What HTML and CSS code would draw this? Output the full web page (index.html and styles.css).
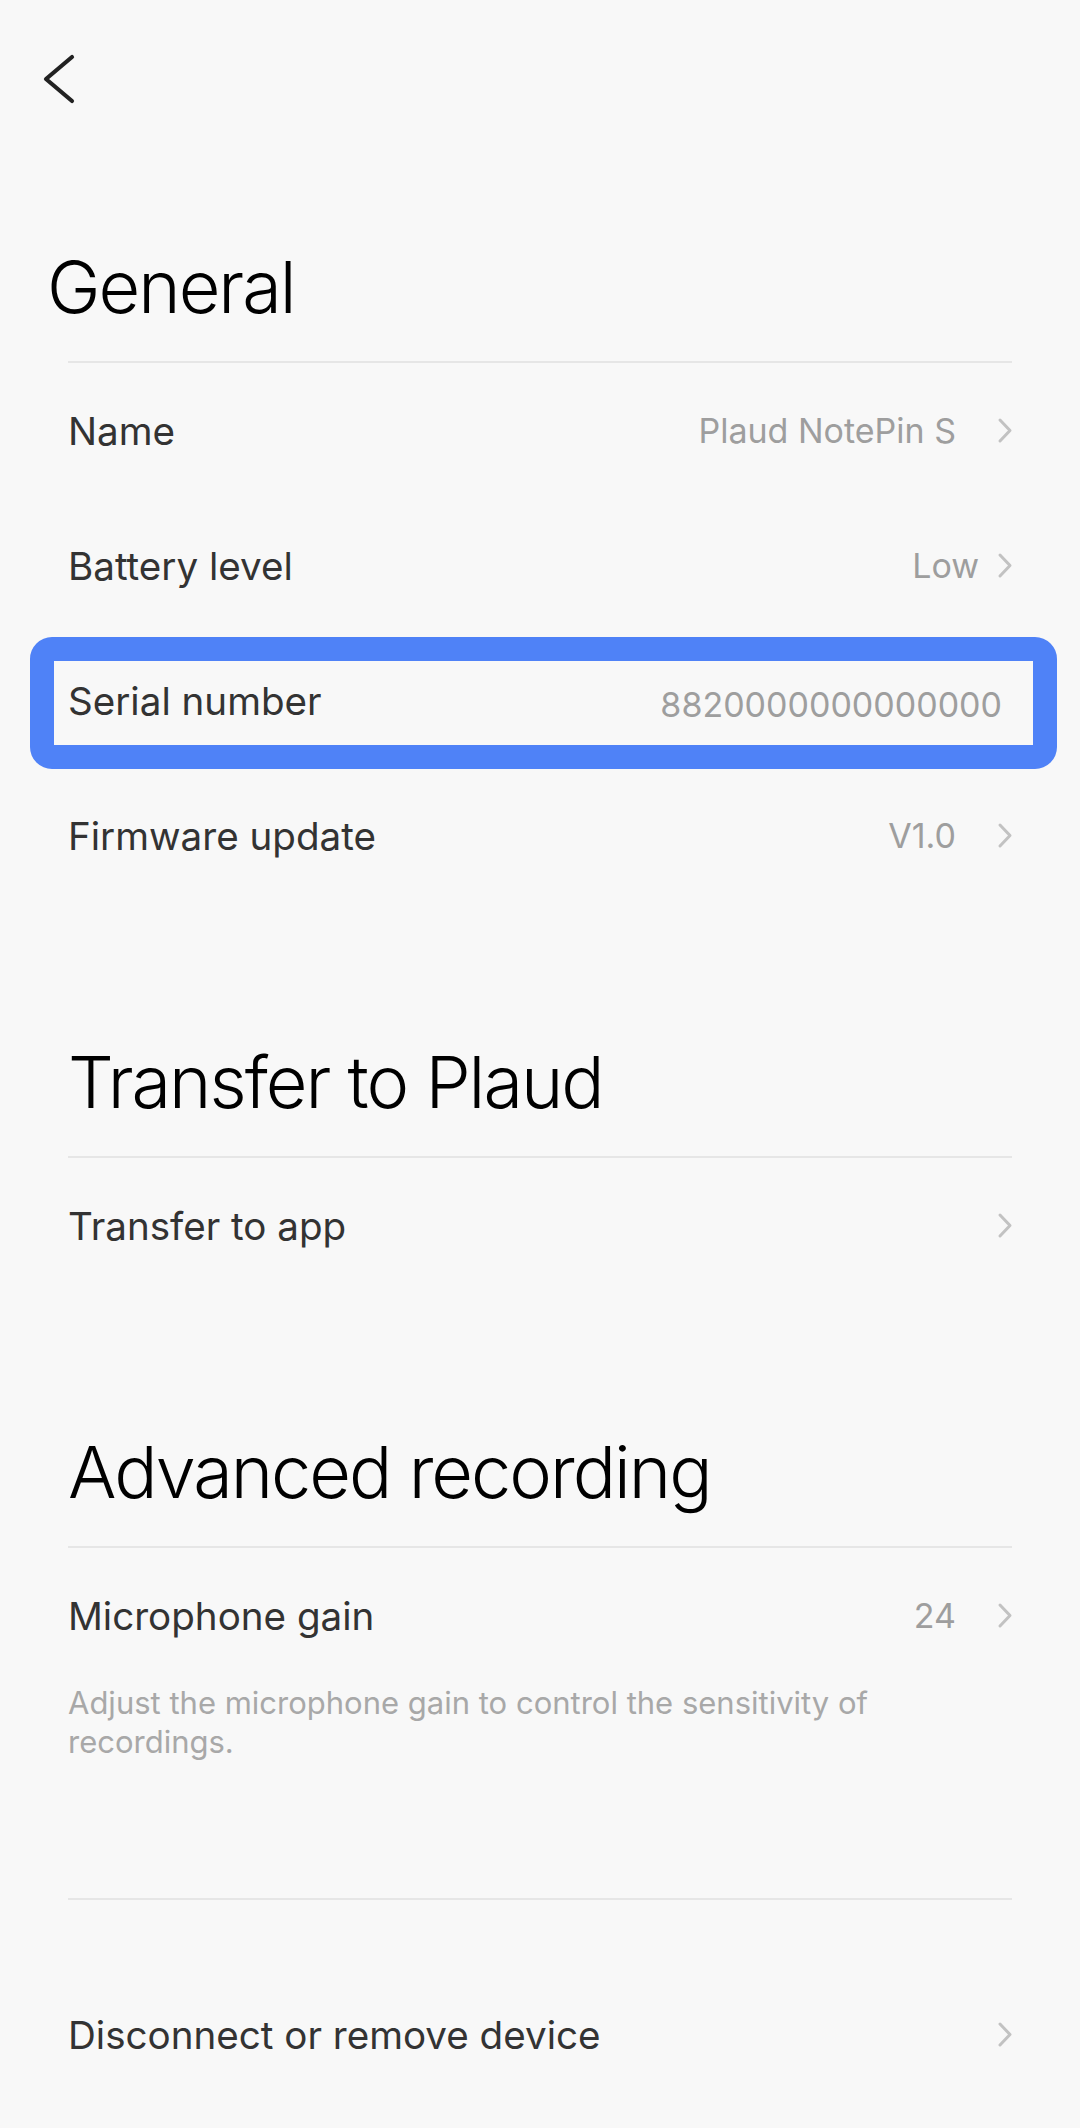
FILE: index.html
```html
<!DOCTYPE html>
<html lang="en">
<head>
    <meta charset="UTF-8">
    <meta name="viewport" content="width=device-width, initial-scale=1.0">
    <title>Device settings</title>
    <link rel="stylesheet" href="styles.css">
</head>
<body>
    <div class="topbar">
        <button class="back" aria-label="Back">
            <svg width="34" height="52" viewBox="0 0 34 52"><path d="M30 4 L4 26 L30 48" fill="none" stroke="#222" stroke-width="4.2" stroke-linecap="round" stroke-linejoin="round"/></svg>
        </button>
    </div>

    <div class="page">
        <section class="group">
            <h2 class="group-title first">General</h2>
            <div class="list">
                <div class="row">
                    <span class="label">Name</span>
                    <span class="value">Plaud NotePin S</span>
                    <svg class="chev" width="18" height="27" viewBox="0 0 18 27"><path d="M4 3 L14 13.5 L4 24" fill="none" stroke="#c2c2c2" stroke-width="3" stroke-linecap="round" stroke-linejoin="round"/></svg>
                </div>
                <div class="row">
                    <span class="label">Battery level</span>
                    <span class="value tight">Low</span>
                    <svg class="chev" width="18" height="27" viewBox="0 0 18 27"><path d="M4 3 L14 13.5 L4 24" fill="none" stroke="#c2c2c2" stroke-width="3" stroke-linecap="round" stroke-linejoin="round"/></svg>
                </div>
                <div class="row highlight">
                    <span class="label">Serial number</span>
                    <span class="value serial">8820000000000000</span>
                </div>
                <div class="row">
                    <span class="label">Firmware update</span>
                    <span class="value">V1.0</span>
                    <svg class="chev" width="18" height="27" viewBox="0 0 18 27"><path d="M4 3 L14 13.5 L4 24" fill="none" stroke="#c2c2c2" stroke-width="3" stroke-linecap="round" stroke-linejoin="round"/></svg>
                </div>
            </div>
        </section>

        <section class="group">
            <h2 class="group-title">Transfer to Plaud</h2>
            <div class="list">
                <div class="row">
                    <span class="label">Transfer to app</span>
                    <svg class="chev" width="18" height="27" viewBox="0 0 18 27"><path d="M4 3 L14 13.5 L4 24" fill="none" stroke="#c2c2c2" stroke-width="3" stroke-linecap="round" stroke-linejoin="round"/></svg>
                </div>
            </div>
        </section>

        <section class="group">
            <h2 class="group-title">Advanced recording</h2>
            <div class="list">
                <div class="row">
                    <span class="label">Microphone gain</span>
                    <span class="value">24</span>
                    <svg class="chev" width="18" height="27" viewBox="0 0 18 27"><path d="M4 3 L14 13.5 L4 24" fill="none" stroke="#c2c2c2" stroke-width="3" stroke-linecap="round" stroke-linejoin="round"/></svg>
                </div>
                <p class="hint">Adjust the microphone gain to control the sensitivity of recordings.</p>
            </div>
        </section>

        <div class="list danger">
            <div class="row">
                <span class="label">Disconnect or remove device</span>
                <svg class="chev" width="18" height="27" viewBox="0 0 18 27"><path d="M4 3 L14 13.5 L4 24" fill="none" stroke="#c2c2c2" stroke-width="3" stroke-linecap="round" stroke-linejoin="round"/></svg>
            </div>
        </div>
    </div>
</body>
</html>
```

FILE: styles.css
```css
body {
    margin: 0;
    background: #f8f8f8;
    font-family: Inter, "Noto Sans", sans-serif;
    color: #333;
}
.topbar {
    height: 245px;
    padding: 53px 0 0 42px;
    box-sizing: border-box;
}
.back {
    background: none;
    border: none;
    padding: 0;
    display: block;
    cursor: pointer;
}
.page {
    padding: 0 68px;
}
.group {
    margin-bottom: 137px;
}
.group-title {
    margin: 0 0 32px;
    font-size: 72px;
    line-height: 84px;
    font-weight: 300;
    color: #000;
    letter-spacing: -2px;
}
.group-title.first {
    margin-left: -21px;
}
.list {
    border-top: 2px solid #e6e6e6;
}
.row {
    height: 135px;
    display: flex;
    align-items: center;
    position: relative;
}
.label {
    flex: 1;
    font-size: 38.6px;
    color: #333;
}
.value {
    font-size: 34px;
    color: #9e9e9e;
    margin-right: 40px;
}
.value.tight {
    margin-right: 17px;
}
.value.serial {
    margin-right: 10px;
    padding-top: 8px;
}
.chev {
    display: block;
    margin-right: -2px;
}
.highlight::after {
    content: "";
    position: absolute;
    left: -38px;
    right: -45px;
    top: 4px;
    bottom: -1px;
    border: 24px solid #4f82f7;
    border-radius: 22px;
}
.hint {
    margin: 0;
    font-size: 31px;
    line-height: 39px;
    color: #a8a8a8;
    padding-right: 120px;
}
.danger {
    padding-top: 67px;
}
```
